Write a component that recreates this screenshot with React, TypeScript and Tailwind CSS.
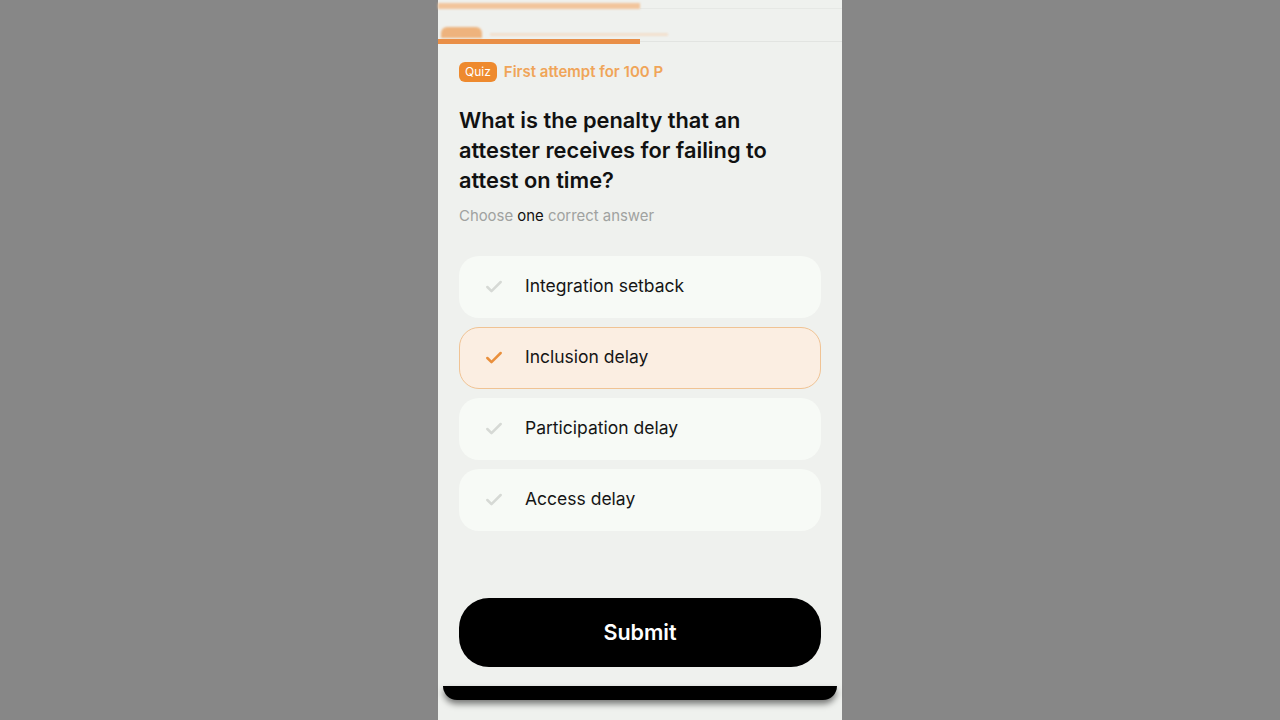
import { Check } from 'lucide-react';

const options = [
  { label: 'Integration setback', selected: false },
  { label: 'Inclusion delay', selected: true },
  { label: 'Participation delay', selected: false },
  { label: 'Access delay', selected: false },
];

const font = { fontFamily: '"Inter", "Noto Sans", sans-serif' };

const App = () => {
  return (
    <div className="w-full h-[720px] bg-[#878787] flex justify-center overflow-hidden" style={font}>
      <div className="w-[404px] h-full bg-[#eff1ee] flex flex-col">
        {/* ghosted header from the previous frame */}
        <div className="pt-[3px] flex">
          <div className="w-[202px] h-[6px] bg-[#f2c59c] blur-[1px]" />
          <div className="flex-1 h-[1px] mt-[5px] bg-[#e6e8e5]" />
        </div>
        <div className="h-[26px] mt-[4px] flex items-end gap-[8px] pl-[3px] opacity-70">
          <div className="w-[41px] h-[11px] mb-[1px] rounded-t-[6px] bg-[#ee9a4e] blur-[1px]" />
          <div className="w-[178px] h-[3px] mb-[3px] bg-[#f4d9bf] blur-[1px]" />
        </div>
        <div className="flex items-center">
          <div className="w-[202px] h-[5px] bg-[#e98f47]" />
          <div className="flex-1 h-[1px] bg-[#e2e4e1]" />
        </div>

        <div className="px-[21px] flex flex-col flex-1">
          <div className="mt-[17px] flex items-center gap-[7px]">
            <span className="h-[20px] px-[6px] rounded-[6px] bg-[#ee8a2e] text-white text-[12px] leading-[20px]">
              Quiz
            </span>
            <span className="text-[15px] font-semibold text-[#f0a559]">First attempt for 100 P</span>
          </div>

          <h1 className="mt-[21px] text-[21.8px] leading-[30px] font-semibold text-[#111]">
            What is the penalty that an
            <br />
            attester receives for failing to
            <br />
            attest on time?
          </h1>
          <p className="mt-[11px] text-[14.9px] leading-[20px] text-[#a0a2a0]">
            Choose <span className="text-[#111]">one</span> correct answer
          </p>

          <div className="mt-[30px] flex flex-col gap-[9px]">
            {options.map((o) => (
              <div
                key={o.label}
                className={
                  o.selected
                    ? 'h-[62px] rounded-[20px] border border-[#f0c394] bg-[#fbeee2] flex items-center pl-[24px]'
                    : 'h-[62px] rounded-[20px] border border-transparent bg-[#f7faf6] flex items-center pl-[24px]'
                }
              >
                <Check
                  size={20}
                  strokeWidth={3}
                  className={o.selected ? 'text-[#e98f3c]' : 'text-[#d6d9d5]'}
                />
                <span className="ml-[21px] text-[17.5px] text-[#151515]">{o.label}</span>
              </div>
            ))}
          </div>

          <button className="mt-[67px] h-[69px] rounded-[30px] bg-black text-white text-[21.5px] font-semibold">
            Submit
          </button>
        </div>

        {/* ghost of the button below */}
        <div className="mt-[17px] mb-[20px] mx-[5px] h-[14px] rounded-b-[30px] bg-black shadow-[0_4px_6px_rgba(0,0,0,0.5)]" />
      </div>
    </div>
  );
};

export default App;
